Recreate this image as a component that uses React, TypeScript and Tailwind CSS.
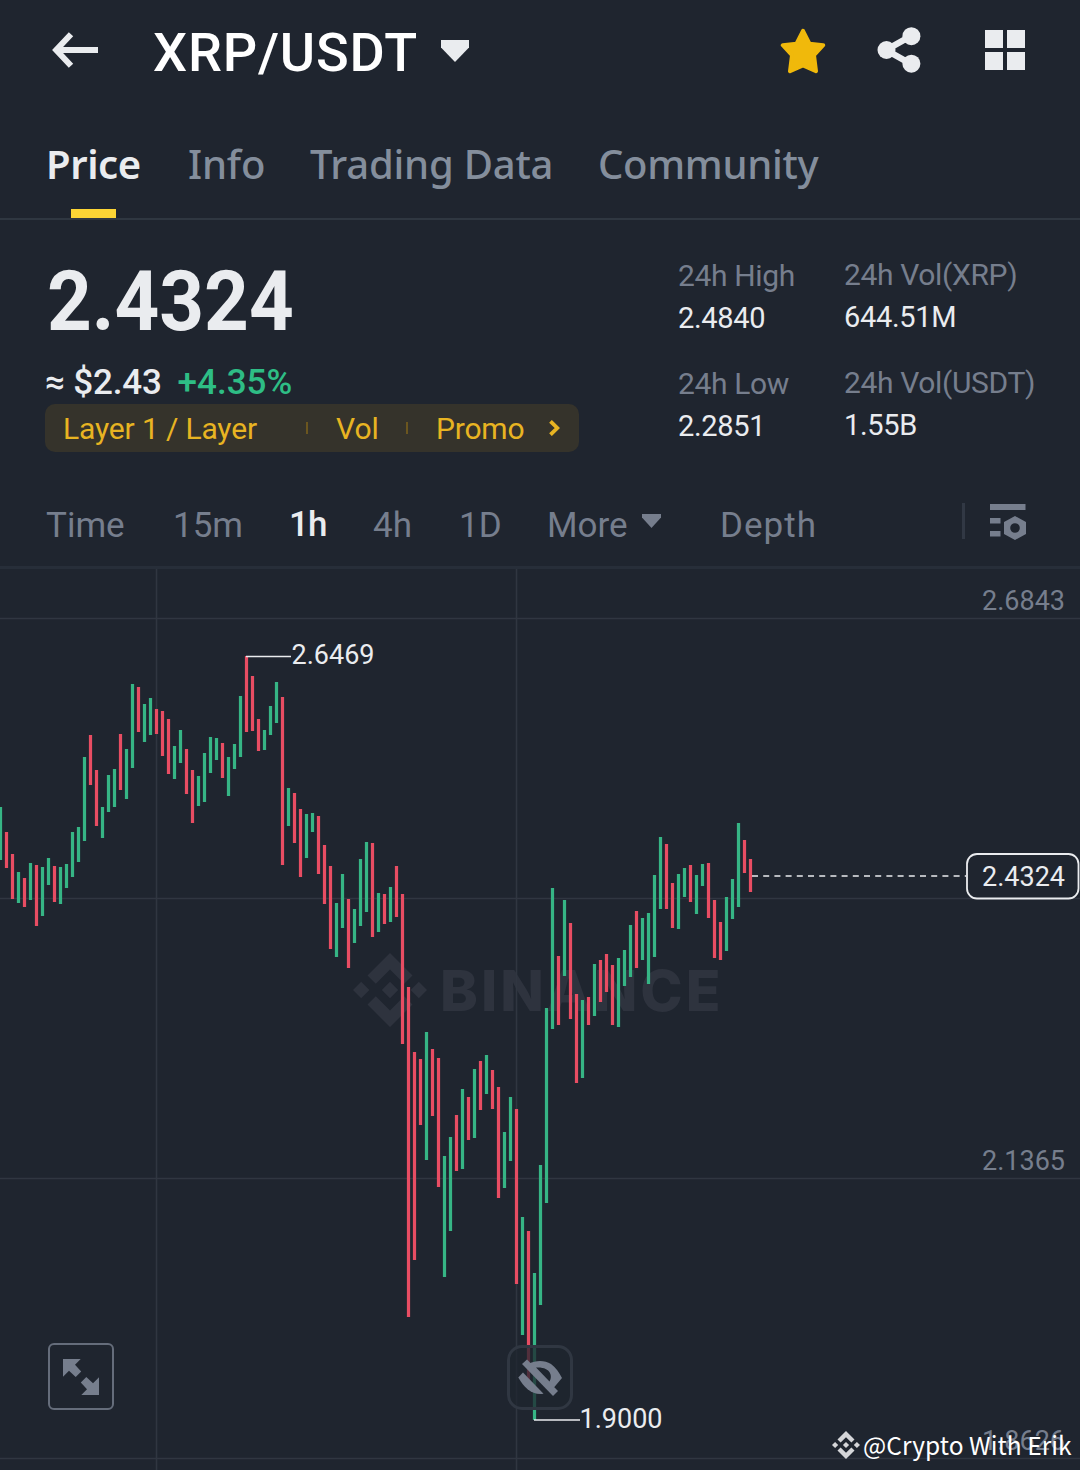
type Candle = ['g' | 'r', number, number];

// [direction, high y, low y], one entry per hourly candle, oldest first
const CANDLES: Candle[] = [
  ['g', 807, 860], ['r', 832, 868], ['r', 854, 899], ['g', 872, 903], ['r', 878, 907], ['g', 863, 900],
  ['r', 865, 926], ['g', 867, 916], ['g', 858, 885], ['r', 866, 902], ['g', 867, 904], ['g', 864, 888],
  ['g', 832, 877], ['g', 827, 862], ['g', 757, 841], ['r', 735, 785], ['r', 770, 826], ['g', 807, 838],
  ['g', 775, 812], ['g', 769, 807], ['r', 734, 790], ['g', 749, 799], ['g', 684, 768], ['r', 687, 732],
  ['g', 704, 742], ['g', 698, 735], ['r', 709, 734], ['r', 711, 756], ['r', 719, 774], ['g', 746, 779],
  ['g', 730, 763], ['r', 749, 794], ['r', 770, 823], ['g', 776, 806], ['g', 753, 802], ['g', 737, 773],
  ['g', 738, 760], ['r', 743, 778], ['g', 757, 796], ['g', 744, 769], ['g', 696, 757], ['r', 656, 732],
  ['r', 676, 731], ['r', 719, 751], ['g', 730, 750], ['g', 706, 735], ['g', 682, 723], ['r', 697, 865],
  ['g', 788, 826], ['r', 793, 843], ['r', 809, 877], ['g', 814, 858], ['g', 813, 832], ['r', 816, 874],
  ['r', 845, 904], ['r', 866, 949], ['g', 903, 957], ['g', 874, 928], ['r', 899, 968], ['g', 909, 943],
  ['g', 859, 926], ['g', 842, 912], ['r', 843, 937], ['g', 893, 932], ['r', 894, 924], ['g', 887, 922],
  ['r', 866, 917], ['r', 894, 1044], ['r', 987, 1317], ['r', 1052, 1260], ['r', 1059, 1125], ['g', 1032, 1160],
  ['r', 1049, 1116], ['r', 1058, 1187], ['g', 1156, 1277], ['g', 1137, 1231], ['r', 1115, 1171], ['g', 1089, 1169],
  ['r', 1097, 1140], ['g', 1069, 1138], ['r', 1061, 1110], ['g', 1055, 1094], ['r', 1070, 1109], ['r', 1087, 1198],
  ['g', 1132, 1188], ['g', 1097, 1161], ['r', 1109, 1284], ['g', 1217, 1335], ['r', 1231, 1380], ['g', 1273, 1420],
  ['g', 1165, 1305], ['g', 1008, 1203], ['g', 888, 1029], ['r', 956, 1025], ['g', 900, 976], ['r', 923, 1019],
  ['r', 994, 1083], ['g', 1000, 1078], ['r', 997, 1025], ['g', 964, 1016], ['r', 960, 1002], ['r', 954, 992],
  ['r', 965, 1025], ['g', 958, 1027], ['g', 950, 986], ['g', 925, 977], ['r', 911, 968], ['g', 918, 960],
  ['g', 913, 984], ['g', 875, 957], ['g', 837, 909], ['r', 844, 909], ['r', 883, 928], ['g', 874, 929],
  ['g', 868, 897], ['r', 865, 902], ['g', 875, 914], ['g', 864, 886], ['r', 863, 918], ['r', 900, 958],
  ['r', 922, 960], ['g', 897, 951], ['g', 879, 919], ['g', 823, 907], ['r', 840, 873], ['r', 859, 892],
];

function BinanceMark({ className }: { className: string }) {
  return (
    <svg viewBox="0 0 74 74" className={className} fill="currentColor">
      <path d="M37 0 59.5 22.4 51.2 30.7 37 16.6 22.8 30.7 14.500 22.4Z" />
      <path d="M37 74 59.5 51.6 51.2 43.3 37 57.4 22.8 43.3 14.500 51.6Z" />
      <path d="M37 28.8 45.2 37 37 45.2 28.8 37Z" />
      <path d="M8.2 28.8 16.4 37 8.2 45.2 0 37Z" />
      <path d="M65.8 28.8 74 37 65.8 45.2 57.6 37Z" />
    </svg>
  );
}

function Header() {
  return (
    <header className="flex h-[100px] items-center pl-[52px] pr-[55px] text-[#eaecef]">
      <svg viewBox="0 0 46 36" className="h-9 w-[46px]" fill="none" stroke="currentColor" strokeWidth="6">
        <path d="M46 18H5" />
        <path d="M19 2.200 4.2 18 19 33.8" />
      </svg>
      <h1 className="ml-[55px] pt-[5px] text-[54px] leading-none font-[550] tracking-[0.8px] text-white">XRP/USDT</h1>
      <svg viewBox="0 0 28 22" className="ml-[23px] mt-0.5 h-[22px] w-7" fill="currentColor">
        <path d="M0 0H28V7.5L14 22 0 7.5Z" />
      </svg>
      <div className="ml-auto flex items-center">
        <svg viewBox="0 0 46 46" className="mt-0.5 h-[46px] w-[46px] text-[#f0b90b]" fill="currentColor" stroke="currentColor" strokeWidth="4" strokeLinejoin="round">
          <path d="M23 2.8 29.6 15.8 43.2 17.2 34 27.2 36 43.2 23 37.400 10 43.2 12 27.2 2.8 17.2 16.4 15.8Z" />
        </svg>
        <svg viewBox="0 0 44 46" className="ml-[51px] h-[46px] w-11" fill="currentColor">
          <path d="M9 23 34 9M9 23 34 37" stroke="currentColor" strokeWidth="6.5" />
          <circle cx="9.500" cy="23" r="9" />
          <circle cx="34.4" cy="9.200" r="9" />
          <circle cx="34.4" cy="36.7" r="9" />
        </svg>
        <div className="ml-[64px] grid w-10 grid-cols-2 gap-1">
          {[0, 1, 2, 3].map((cell) => (
            <span key={cell} className="h-[18px] bg-[#eaecef]" />
          ))}
        </div>
      </div>
    </header>
  );
}

function Tabs() {
  return (
    <nav className="flex h-[120px] border-b-2 border-[#2f3741] pt-[34px] pl-[44px] font-['Noto_Sans',sans-serif] text-[40px] leading-[60px] font-medium tracking-[-0.2px] whitespace-nowrap text-[#848e9c]">
      <div className="w-[144px]">
        <div className="ml-[2px] font-semibold tracking-[-0.4px] text-[#eaecef]">Price</div>
        <div className="mt-[15px] ml-[27px] h-[9px] w-[45px] bg-[#fcd535]" />
      </div>
      <div className="w-[122px]">Info</div>
      <div className="w-[288px]">Trading Data</div>
      <div className="tracking-[-0.3px]">Community</div>
    </nav>
  );
}

function Stat({ label, value }: { label: string; value: string }) {
  return (
    <div className="leading-[42px]">
      <div className="text-[30px] tracking-[-0.35px] text-[#767e8d]">{label}</div>
      <div className="text-[29px] tracking-[-0.3px] text-[#eaecef]">{value}</div>
    </div>
  );
}

function Summary() {
  return (
    <section className="flex h-[262px] whitespace-nowrap">
      <div className="w-[632px] pt-10 pl-[45px]">
        <div className="ml-[2px] origin-left scale-x-[0.93] text-[84px] leading-[84px] font-bold text-[#eaecef]">2.4324</div>
        <div className="mt-[17px] flex h-[43px] gap-4 text-[35px] leading-[44px] font-medium">
          <span className="tracking-[-0.2px] text-[#eaecef]">≈ $2.43</span>
          <span className="text-[#2ebd85]">+4.35%</span>
        </div>
        <div className="flex h-12 w-[534px] items-center rounded-[10px] bg-[#35332b] pl-[18px] text-[30px] leading-[48px] text-[#e8b422]">
          <span className="w-[243px] pt-0.5 tracking-[-0.15px]">Layer 1 / Layer</span>
          <span className="h-3 w-0.5 bg-[#6b561f]" />
          <span className="ml-[28px] w-[70px] pt-0.5">Vol</span>
          <span className="h-3 w-0.5 bg-[#6b561f]" />
          <span className="ml-[28px] pt-0.5 tracking-[-0.2px]">Promo</span>
          <svg viewBox="0 0 11 16" className="ml-[25px] h-4 w-[11px]" fill="none" stroke="currentColor" strokeWidth="3.8">
            <path d="M1.5 1.3 8.3 8 1.5 14.7" />
          </svg>
        </div>
      </div>
      <div className="flex w-[166px] flex-col gap-6 pt-[35px] pl-[46px]">
        <Stat label="24h High" value="2.4840" />
        <Stat label="24h Low" value="2.2851" />
      </div>
      <div className="flex flex-col gap-6 pt-[34px] pl-[46px]">
        <Stat label="24h Vol(XRP)" value="644.51M" />
        <Stat label="24h Vol(USDT)" value="1.55B" />
      </div>
    </section>
  );
}

function Intervals() {
  return (
    <nav className="flex h-[87px] items-center border-b-[3px] border-[#272e39] pl-[46px] text-[35px] leading-[44px] whitespace-nowrap text-[#767e8d]">
      <span className="w-[127px] pt-1">Time</span>
      <span className="w-[116px] pt-1">15m</span>
      <span className="w-[84px] pt-0.5 font-medium tracking-[-0.8px] text-[#eaecef]">1h</span>
      <span className="w-[86px] pt-1">4h</span>
      <span className="w-[88px] pt-1">1D</span>
      <span className="w-[95px] pt-1">More</span>
      <svg viewBox="0 0 19 14" className="mb-1.5 h-3.5 w-[19px]" fill="currentColor">
        <path d="M0 0H19V3.5L9.5 14 0 3.5Z" />
      </svg>
      <span className="ml-[59px] pt-1 tracking-[1px]">Depth</span>
      <span className="mb-1.5 ml-auto h-9 w-[3px] bg-[#313844]" />
      <svg viewBox="0 0 36 36" className="mr-[54px] mb-1 ml-[25px] h-9 w-9" fill="currentColor">
        <path d="M0 0H35.5V6H0ZM0 14H10.5V19.5H0ZM0 27H10.5V32.5H0Z" />
        <path fillRule="evenodd" d="M25 12 36 18V30L25 36 14 30V18ZM25 19.2A4.8 4.8 0 1 0 25 28.8 4.8 4.8 0 1 0 25 19.2Z" />
      </svg>
    </nav>
  );
}

function Chart() {
  return (
    <section className="relative h-[901px] overflow-hidden">
      <div className="absolute top-[383px] left-[353px] flex items-center text-[#2e333e]">
        <BinanceMark className="h-[74px] w-[74px]" />
        <span className="ml-[13px] pt-0.5 font-['Inter',sans-serif] text-[57px] leading-[74px] font-extrabold tracking-[3px]">BINANCE</span>
      </div>
      <svg viewBox="0 569 1080 901" className="absolute inset-0 h-[901px] w-[1080px]" fontSize="27">
        <path d="M156.5 569V1470M516.5 569V1470M0 618.5H1080M0 898.5H1080M0 1178.5H1080M0 1458.5H1080" stroke="#303641" strokeWidth="1.6" />
        {CANDLES.map(([side, high, low], i) => (
          <rect key={i} x={i * 6 - 1.1} y={high} width="3.2" height={low - high} fill={side === 'g' ? '#36b585' : '#e84d63'} />
        ))}
        <g fill="#767e8d" textAnchor="end">
          <text x="1065" y="610">2.6843</text>
          <text x="1065" y="1170">2.1365</text>
          <text x="1065" y="1450">1.8626</text>
        </g>
        <path d="M246 656.5H291M534 1420H580" stroke="#eaecef" strokeWidth="1.6" />
        <path d="M752 876H966" stroke="#eaecef" strokeWidth="1.6" strokeDasharray="6 5.2" />
        <rect x="967" y="854" width="111.5" height="44.5" rx="10" fill="#1f252f" stroke="#eaecef" strokeWidth="1.8" />
        <g fill="#eaecef">
          <text x="291.5" y="664">2.6469</text>
          <text x="579.5" y="1428">1.9000</text>
          <text x="982" y="886">2.4324</text>
        </g>
      </svg>
      <button className="absolute top-[774px] left-[48px] flex h-[67px] w-[66px] items-center justify-center rounded-[6px] border-2 border-[#656d7b]">
        <svg viewBox="0 0 36 36" className="h-9 w-9 text-[#767e8d]" fill="currentColor">
          <path d="M0 0H17.7L12 5.7 18.2 12.5 12.7 18 6 11.7 0 17.7Z" />
          <path d="M36 36H18.3L24 30.3 17.8 23.500 23.3 18 30 24.3 36 18.3Z" />
        </svg>
      </button>
      <button className="absolute top-[776px] left-[507px] h-[65px] w-[66px] rounded-[15px] border-[3px] border-[#303742] bg-[#1f252f]/75">
        <svg viewBox="507 1345 66 65" className="absolute -top-[3px] -left-[3px] h-[65px] w-[66px] text-[#767e8d]" fill="currentColor">
          <path d="M522 1364 527 1359.5 558 1391 553 1396Z" />
          <path
            fillRule="evenodd"
            d="M529 1363.5C536 1360 545 1360 551 1364 556 1367.5 559 1372.5 562 1378L553.5 1388ZM536 1367.500 549.5 1381.5C553 1376 550.5 1366.5 536 1367.500Z"
          />
          <path d="M518.3 1377.5 523 1372.5 543.5 1393.800C532 1395.500 524 1387.500 518.3 1377.5Z" />
        </svg>
      </button>
      <div className="absolute top-[861px] left-[832px] flex items-center text-white">
        <BinanceMark className="h-7 w-7 text-[#d5d6d9]" />
        <span className="ml-[3px] font-['Noto_Sans_CJK_SC',sans-serif] text-[24.5px] leading-[30px] tracking-[0.05px] whitespace-nowrap">@Crypto With Erik</span>
      </div>
    </section>
  );
}

export default function App() {
  return (
    <main className="h-[1470px] w-[1080px] overflow-hidden bg-[#1f252f] font-['Roboto',sans-serif]">
      <Header />
      <Tabs />
      <Summary />
      <Intervals />
      <Chart />
    </main>
  );
}
